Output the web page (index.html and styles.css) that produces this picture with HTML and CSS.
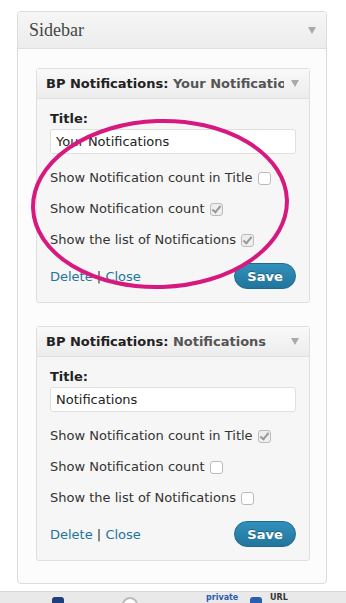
FILE: index.html
```html
<!DOCTYPE html>
<html>

<head>
  <title>Sidebar Widgets</title>
  <link rel="stylesheet" href="styles.css">
</head>

<body>
  <div class="sidebar">
    <div class="sidebar-head">
      <span>Sidebar</span>
      <span class="arrow"></span>
    </div>
    <div class="sidebar-body">

      <div class="widget">
        <div class="widget-head">
          <span class="widget-title"><b>BP Notifications:</b> <i>Your Notifications</i></span>
          <span class="arrow"></span>
        </div>
        <div class="widget-body">
          <label class="lbl">Title:</label>
          <div class="field">Your Notifications</div>
          <div class="row">Show Notification count in Title <span class="box"></span></div>
          <div class="row">Show Notification count <span class="box checked"></span></div>
          <div class="row">Show the list of Notifications <span class="box checked"></span></div>
          <div class="foot">
            <span><a href="#">Delete</a> | <a href="#">Close</a></span>
            <button>Save</button>
          </div>
        </div>
      </div>

      <div class="widget">
        <div class="widget-head">
          <span class="widget-title"><b>BP Notifications:</b> <i>Notifications</i></span>
          <span class="arrow"></span>
        </div>
        <div class="widget-body">
          <label class="lbl">Title:</label>
          <div class="field">Notifications</div>
          <div class="row">Show Notification count in Title <span class="box checked"></span></div>
          <div class="row">Show Notification count <span class="box"></span></div>
          <div class="row">Show the list of Notifications <span class="box"></span></div>
          <div class="foot">
            <span><a href="#">Delete</a> | <a href="#">Close</a></span>
            <button>Save</button>
          </div>
        </div>
      </div>

    </div>
  </div>

  <div class="strip">
    <span class="ico ico1"></span>
    <span class="ico ico2"></span>
    <span class="priv">private</span>
    <span class="ico ico3"></span>
    <span class="url">URL</span>
  </div>

  <!-- hand drawn highlight -->
  <svg class="circle" width="346" height="603" viewBox="0 0 346 603">
    <ellipse cx="160" cy="204" rx="127" ry="83" fill="none" stroke="#d7187f" stroke-width="4" transform="rotate(-2 160 204)"/>
  </svg>
</body>

</html>
```

FILE: styles.css
```css
body {
  margin: 0;
  background: #fff;
  font-family: "DejaVu Sans", sans-serif;
  font-size: 13px;
  color: #333;
  position: relative;
  height: 603px;
  overflow: hidden;
}

.sidebar {
  margin: 11px 19px 0 17px;
  border: 1px solid #dcdcdc;
  border-radius: 4px;
  background: #fcfcfc;
}

.sidebar-head {
  height: 36px;
  display: flex;
  align-items: center;
  justify-content: space-between;
  padding: 0 10px 0 11px;
  background: linear-gradient(#f6f6f6, #ececec);
  border-bottom: 1px solid #dfdfdf;
  border-radius: 4px 4px 0 0;
  font-family: "Liberation Serif", serif;
  font-size: 18px;
  color: #464646;
}

.arrow {
  width: 0;
  height: 0;
  border-left: 4px solid transparent;
  border-right: 4px solid transparent;
  border-top: 7px solid #aaa;
}

.sidebar-body {
  padding: 19px 16px 22px 18px;
}

.widget {
  border: 1px solid #dfdfdf;
  border-radius: 3px;
  background: #f6f6f6;
  margin-bottom: 23px;
}

.widget:last-child {
  margin-bottom: 0;
}

.widget-head {
  height: 29px;
  display: flex;
  align-items: center;
  justify-content: space-between;
  padding: 0 10px 0 9px;
  background: linear-gradient(#f9f9f9, #ececec);
  border-bottom: 1px solid #dfdfdf;
}

.widget-title {
  white-space: nowrap;
  overflow: hidden;
  width: 238px;
  font-weight: bold;
  color: #222;
}

.widget-title i {
  font-style: normal;
  color: #555;
}

.widget-body {
  padding: 12px 13px 13px 13px;
}

.lbl {
  display: block;
  font-weight: bold;
  color: #222;
  line-height: 16px;
}

.field {
  margin-top: 2px;
  height: 23px;
  line-height: 23px;
  padding: 0 5px;
  background: #fff;
  border: 1px solid #dfdfdf;
  border-radius: 3px;
  color: #222;
}

.row {
  margin-top: 11px;
  line-height: 20px;
  display: flex;
  align-items: center;
}

.field + .row {
  margin-top: 14px;
}

.box {
  display: inline-block;
  width: 11px;
  height: 11px;
  margin-left: 5px;
  border: 1px solid #bbb;
  border-radius: 3px;
  background: #fff;
  position: relative;
}

.box.checked {
  background: #eee;
}

.box.checked::after {
  content: "";
  position: absolute;
  left: 3px;
  top: 0px;
  width: 3px;
  height: 7px;
  border-right: 2px solid #999;
  border-bottom: 2px solid #999;
  transform: rotate(40deg);
}

.foot {
  margin-top: 13px;
  display: flex;
  justify-content: space-between;
  align-items: center;
}

a {
  color: #21759b;
  text-decoration: none;
}

button {
  width: 62px;
  height: 26px;
  border-radius: 13px;
  border: 1px solid #1e6a8d;
  background: linear-gradient(#3290bc, #21759b);
  color: #fff;
  font-family: "DejaVu Sans", sans-serif;
  font-size: 13px;
  font-weight: bold;
  text-shadow: 0 -1px 0 rgba(0, 0, 0, 0.3);
  padding: 0;
}

.strip {
  margin-top: 7px;
  height: 13px;
  background: #e9e9e9;
  border-top: 1px solid #d8d8d8;
  position: relative;
  overflow: hidden;
}

.ico {
  position: absolute;
  top: 5px;
  width: 12px;
  height: 12px;
  border-radius: 3px;
}

.ico1 {
  left: 52px;
  background: #1f3f7a;
}

.ico2 {
  left: 122px;
  border-radius: 50%;
  background: #fff;
  border: 2px solid #bbb;
}

.ico3 {
  left: 250px;
  background: #2a5db0;
}

.priv {
  position: absolute;
  left: 206px;
  top: 1px;
  font-size: 8px;
  line-height: 9px;
  font-weight: bold;
  color: #2a5db0;
}

.url {
  position: absolute;
  left: 270px;
  top: 1px;
  font-size: 8px;
  line-height: 9px;
  font-weight: bold;
  color: #333;
}

.circle {
  position: absolute;
  left: 0;
  top: 0;
  pointer-events: none;
}
```
